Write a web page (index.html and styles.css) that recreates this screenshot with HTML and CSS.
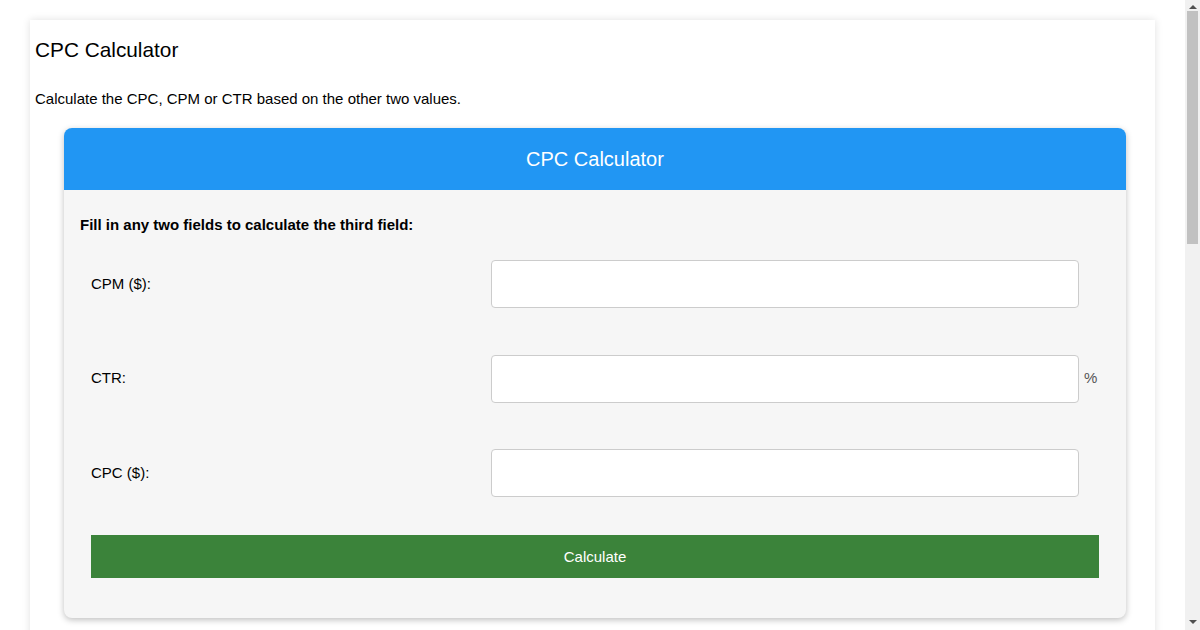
FILE: index.html
```html
<!DOCTYPE html>
<html lang="en">
<head>
<meta charset="utf-8">
<title>CPC Calculator</title>
<link rel="stylesheet" href="styles.css">
</head>
<body>
<div class="page">
  <h1 class="title">CPC Calculator</h1>
  <p class="intro">Calculate the CPC, CPM or CTR based on the other two values.</p>
  <div class="card">
    <div class="card-header">CPC Calculator</div>
    <div class="card-body">
      <h3 class="hint">Fill in any two fields to calculate the third field:</h3>
      <div class="rows">
        <div class="row">
          <label class="label" for="cpm">CPM ($):</label>
          <input class="field" id="cpm" type="text">
          <span class="unit"></span>
        </div>
        <div class="row">
          <label class="label" for="ctr">CTR:</label>
          <input class="field" id="ctr" type="text">
          <span class="unit">%</span>
        </div>
        <div class="row">
          <label class="label" for="cpc">CPC ($):</label>
          <input class="field" id="cpc" type="text">
          <span class="unit"></span>
        </div>
        <button class="calc" type="button">Calculate</button>
      </div>
    </div>
  </div>
</div>
<div class="scrollbar" aria-hidden="true">
  <span class="arrow arrow-up"></span>
  <span class="thumb"></span>
  <span class="arrow arrow-down"></span>
</div>
</body>
</html>
```

FILE: styles.css
```css
html, body {
  margin: 0;
  padding: 0;
  background: #ffffff;
}
body {
  font-family: "Liberation Sans", Arial, sans-serif;
  color: #000;
  padding: 20px 45px 0 30px;
}
.page {
  background: #fff;
  box-shadow: 0 0 8px rgba(0, 0, 0, 0.12);
  padding: 5px 5px 0 5px;
  min-height: 1560px;
}
.title {
  font-size: 20.8px;
  font-weight: normal;
  margin: 0;
  padding-top: 13px;
  line-height: 24px;
}
.intro {
  font-size: 15px;
  margin: 28px 0 0 0;
  line-height: 18px;
}
.card {
  margin: 20px 24px 0 29px;
  border-radius: 8px;
  overflow: hidden;
  background: #f6f6f6;
  box-shadow: 0 2px 6px rgba(0, 0, 0, 0.25);
}
.card-header {
  background: #2196f3;
  color: #fff;
  font-size: 20px;
  height: 62px;
  display: flex;
  align-items: center;
  justify-content: center;
}
.card-body {
  padding: 16px 16px 40px 16px;
}
.hint {
  font-size: 15px;
  font-weight: bold;
  margin: 0;
  padding-top: 10px;
  line-height: 18px;
}
.rows {
  padding: 3px 11px 0 11px;
}
.row {
  display: grid;
  grid-template-columns: 400px 588px 20px;
  align-items: center;
  padding: 23.25px 0 23.25px 0;
}
.label {
  font-size: 15px;
  margin-top: -2px;
}
.field {
  box-sizing: border-box;
  height: 48px;
  width: 100%;
  border: 1px solid #ccc;
  border-radius: 4px;
  background: #fff;
  margin: 0;
  font-size: 15px;
  padding: 0 10px;
}
.unit {
  font-size: 15px;
  color: #555;
  padding-left: 5px;
  margin-top: -2px;
}
.calc {
  display: block;
  width: 100%;
  height: 43px;
  margin-top: 14px;
  border: none;
  background: #3b833a;
  color: #fff;
  font-family: "Liberation Sans", Arial, sans-serif;
  font-size: 15px;
}
.scrollbar {
  position: fixed;
  top: 0;
  right: 0;
  width: 15px;
  height: 100%;
  background: #f1f1f1;
  display: flex;
  flex-direction: column;
  align-items: center;
}
.thumb {
  width: 11px;
  height: 233px;
  background: #c1c1c1;
  margin-top: 2px;
}
.arrow {
  width: 0;
  height: 0;
  border-left: 4px solid transparent;
  border-right: 4px solid transparent;
}
.arrow-up {
  border-bottom: 4px solid #505050;
  margin-top: 5px;
  margin-left: 1px;
}
.arrow-down {
  border-top: 4px solid #505050;
  margin-top: auto;
  margin-bottom: 6px;
  margin-left: 1px;
}
```
